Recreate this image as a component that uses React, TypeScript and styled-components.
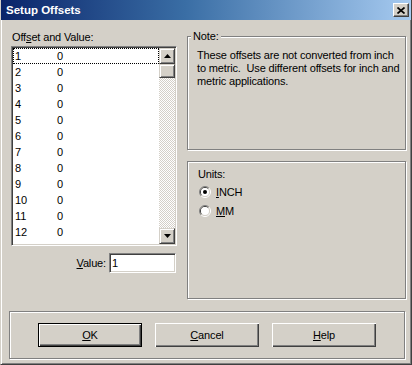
import React, { ReactElement } from 'react';
import styled, { createGlobalStyle } from 'styled-components';

const GlobalStyle = createGlobalStyle`
  html, body {
    margin: 0;
    padding: 0;
    background: #d4d0c8;
  }
  * {
    box-sizing: border-box;
  }
`;

const Window = styled.div`
  display: flex;
  width: 412px;
  height: 365px;
  flex-direction: column;
  padding: 0 1px 3px 1px;
  border: 1px solid;
  border-top: 0;
  border-color: #d4d0c8 #404040 #404040 #d4d0c8;
  background: #d4d0c8;
  box-shadow: inset 1px 0 #fff, inset -1px -1px #808080;
  font-family: 'Liberation Sans', Arial, sans-serif;
  font-size: 11px;
  letter-spacing: -0.15px;
  color: #000;
`;

const TitleBar = styled.div`
  display: flex;
  height: 20px;
  align-items: center;
  justify-content: space-between;
  margin: 0 -1px;
  padding: 0 2px 0 5px;
  background: linear-gradient(to right, #0a246a 0%, #3a6ea5 45%, #a6caf0 100%);
`;

const Title = styled.span`
  color: #fff;
  font-size: 11.5px;
  font-weight: bold;
  letter-spacing: 0;
`;

const CloseButton = styled.button`
  display: flex;
  width: 16px;
  height: 14px;
  align-items: center;
  justify-content: center;
  padding: 0;
  border: 1px solid;
  border-color: #fff #404040 #404040 #fff;
  background: #d4d0c8;
  box-shadow: inset -1px -1px #808080;
`;

const Content = styled.div`
  display: flex;
  flex-direction: column;
  padding: 10px 4px 0 9px;
`;

const TopGrid = styled.div`
  display: grid;
  height: 269px;
  grid-template-columns: 166px 219px;
  column-gap: 10px;
`;

const Column = styled.div`
  display: flex;
  flex-direction: column;
`;

const FieldLabel = styled.div`
  margin-top: 1px;
  padding-left: 1px;
  line-height: 13px;
`;

const ListFrame = styled.div`
  display: flex;
  height: 200px;
  margin-top: 2px;
  padding: 1px;
  border: 1px solid;
  border-color: #808080 #fff #fff #808080;
  background: #fff;
  box-shadow: inset 1px 1px #404040, inset -1px -1px #d4d0c8;
`;

const Rows = styled.div`
  flex: 1;
  overflow: hidden;
`;

const Row = styled.div<{ $focused?: boolean }>`
  display: grid;
  height: 16px;
  grid-template-columns: 42px 1fr;
  align-items: center;
  padding-left: 1px;
  border: 1px ${(p) => (p.$focused ? 'dotted #000' : 'solid transparent')};
  color: #000;
  line-height: 14px;
`;

const ScrollBar = styled.div`
  display: flex;
  width: 16px;
  flex-direction: column;
`;

const RaisedBlock = styled.div<{ $h: number }>`
  display: flex;
  height: ${(p) => p.$h}px;
  flex: 0 0 auto;
  align-items: center;
  justify-content: center;
  border: 1px solid;
  border-color: #d4d0c8 #404040 #404040 #d4d0c8;
  background: #d4d0c8;
  box-shadow: inset 1px 1px #fff, inset -1px -1px #808080;
`;

const Track = styled.div`
  flex: 1;
  background: repeating-conic-gradient(#d4d0c8 0 25%, #fff 0 50%) 0 0 / 2px 2px;
`;

const ValueRow = styled.div`
  display: flex;
  align-items: center;
  justify-content: flex-end;
  gap: 3px;
  margin-top: 7px;
  padding-right: 1px;
`;

const TextInput = styled.input`
  width: 67px;
  height: 20px;
  padding: 0 2px;
  border: 1px solid;
  border-color: #808080 #fff #fff #808080;
  background: #fff;
  box-shadow: inset 1px 1px #404040, inset -1px -1px #d4d0c8;
  font-family: inherit;
  font-size: 11px;
  color: #000;
  outline: none;
`;

const GroupBox = styled.div<{ $h: number; $mt: number }>`
  position: relative;
  height: ${(p) => p.$h}px;
  margin-top: ${(p) => p.$mt}px;
  border: 1px solid #808080;
  box-shadow: inset 1px 1px #fff, 1px 1px #fff;
`;

const Legend = styled.span`
  position: absolute;
  top: -7px;
  left: 3px;
  padding: 0 2px;
  background: #d4d0c8;
  line-height: 13px;
`;

const NoteText = styled.div`
  padding: 12px 8px 0 9px;
  line-height: 13px;
  white-space: pre;
`;

const UnitsBody = styled.div`
  display: flex;
  flex-direction: column;
  padding: 6px 10px;
`;

const UnitsLabel = styled.div`
  margin-bottom: 1px;
  line-height: 13px;
`;

const RadioRow = styled.label`
  display: flex;
  height: 19px;
  align-items: center;
  gap: 5px;
  padding-left: 1px;
`;

const BottomPanel = styled.div`
  display: flex;
  height: 48px;
  align-items: center;
  justify-content: center;
  gap: 13px;
  margin: 12px 1px 0 -2px;
  border: 1px solid #808080;
  box-shadow: inset 1px 1px #fff, 1px 1px #fff;
`;

const DialogButton = styled.button<{ $default?: boolean }>`
  width: 104px;
  height: 24px;
  padding: 0;
  border: ${(p) => (p.$default ? '1px solid #000' : '0')};
  background: #d4d0c8;
  box-shadow: inset 1px 1px #fff, inset -1px -1px #404040, inset -2px -2px #808080;
  font-family: inherit;
  font-size: 11px;
  letter-spacing: -0.15px;
  color: #000;
`;

const Key = styled.span`
  text-decoration: underline;
`;

const Arrow = ({ down }: { down?: boolean }): ReactElement => (
  <svg width="7" height="4" viewBox="0 0 7 4">
    <path d={down ? 'M0 0h7L3.5 4z' : 'M0 4h7L3.5 0z'} fill="#000" />
  </svg>
);

const Radio = ({ checked }: { checked?: boolean }): ReactElement => (
  <svg width="12" height="12" viewBox="0 0 12 12">
    <path d="M2.1 9.9A5.5 5.5 0 0 1 9.9 2.1" fill="none" stroke="#808080" />
    <path d="M9.9 2.1A5.5 5.5 0 0 1 2.1 9.9" fill="none" stroke="#fff" />
    <path d="M2.8 9.2A4.5 4.5 0 0 1 9.2 2.8" fill="none" stroke="#404040" />
    <path d="M9.2 2.8A4.5 4.5 0 0 1 2.8 9.2" fill="none" stroke="#d4d0c8" />
    <circle cx="6" cy="6" r="4" fill="#fff" />
    {checked && <circle cx="6" cy="6" r="2" fill="#000" />}
  </svg>
);

// 12 rows fit, the 13th peeks out under the list's bottom edge
const offsets = Array.from({ length: 13 }, (_, i) => ({ id: i + 1, value: 0 }));

const App = (): ReactElement => (
  <>
    <GlobalStyle />
    <Window>
      <TitleBar>
        <Title>Setup Offsets</Title>
        <CloseButton type="button">
          <svg width="8" height="7" viewBox="0 0 8 7">
            <path d="M0.5 0.5L7.5 6.5M7.5 0.5L0.5 6.5" stroke="#000" strokeWidth="1.7" />
          </svg>
        </CloseButton>
      </TitleBar>
      <Content>
        <TopGrid>
          <Column>
            <FieldLabel>
              Off<Key>s</Key>et and Value:
            </FieldLabel>
            <ListFrame>
              <Rows>
                {offsets.map((o) => (
                  <Row key={o.id} $focused={o.id === 1}>
                    <span>{o.id}</span>
                    <span>{o.value}</span>
                  </Row>
                ))}
              </Rows>
              <ScrollBar>
                <RaisedBlock $h={16}>
                  <Arrow />
                </RaisedBlock>
                <RaisedBlock $h={14} />
                <Track />
                <RaisedBlock $h={16}>
                  <Arrow down />
                </RaisedBlock>
              </ScrollBar>
            </ListFrame>
            <ValueRow>
              <span>
                <Key>V</Key>alue:
              </span>
              <TextInput defaultValue="1" />
            </ValueRow>
          </Column>
          <Column>
            <GroupBox $h={114} $mt={6}>
              <Legend>Note:</Legend>
              <NoteText>
                {'These offsets are not converted from inch\nto metric.  Use different offsets for inch and\nmetric applications.'}
              </NoteText>
            </GroupBox>
            <GroupBox $h={138} $mt={11}>
              <UnitsBody>
                <UnitsLabel>Units:</UnitsLabel>
                <RadioRow>
                  <Radio checked />
                  <span>
                    <Key>I</Key>NCH
                  </span>
                </RadioRow>
                <RadioRow>
                  <Radio />
                  <span>
                    <Key>M</Key>M
                  </span>
                </RadioRow>
              </UnitsBody>
            </GroupBox>
          </Column>
        </TopGrid>
        <BottomPanel>
          <DialogButton type="button" $default>
            <Key>O</Key>K
          </DialogButton>
          <DialogButton type="button">
            <Key>C</Key>ancel
          </DialogButton>
          <DialogButton type="button">
            <Key>H</Key>elp
          </DialogButton>
        </BottomPanel>
      </Content>
    </Window>
  </>
);

export default App;
